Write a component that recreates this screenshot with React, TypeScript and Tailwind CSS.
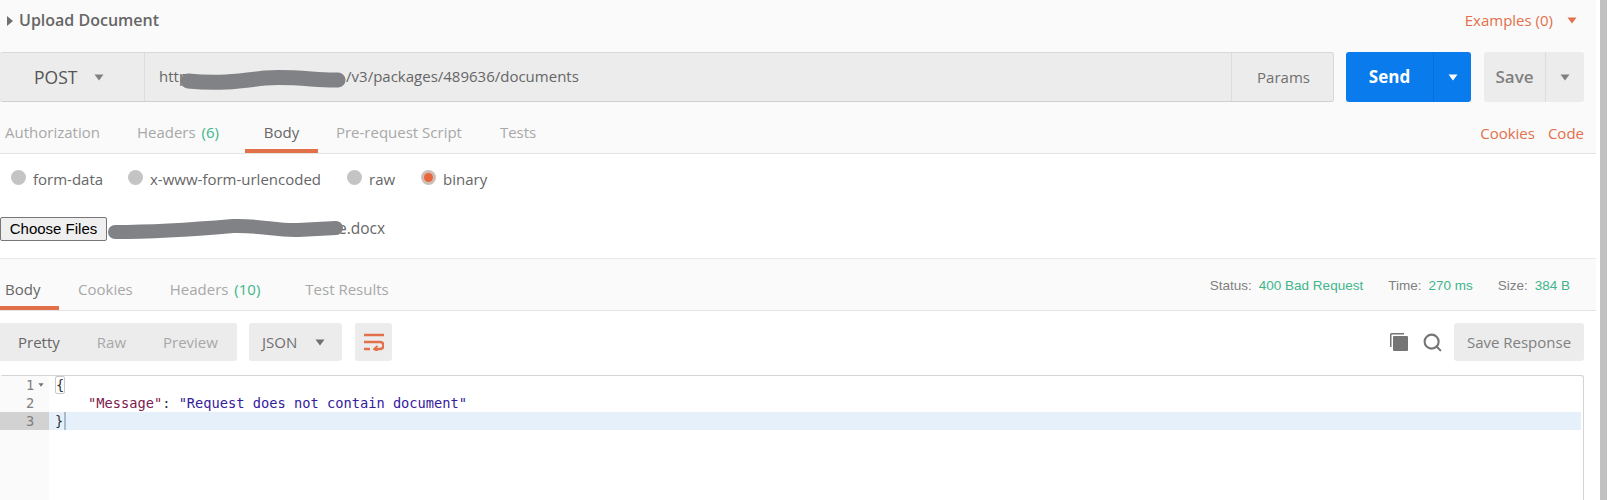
import { Search } from 'lucide-react'

const sans = 'font-["Open_Sans",sans-serif]'
const tab = 'flex h-full items-center pt-[9px]'

function Caret({ className }: { className: string }) {
  return (
    <svg viewBox="0 0 10 7" className={className}>
      <path d="M0.5 0.5h9L5 6.5z" fill="currentColor" />
    </svg>
  )
}

function Redaction({ className, box, d, width }: { className: string; box: string; d: string; width: number }) {
  return (
    <svg viewBox={box} className={`absolute ${className}`}>
      <path d={d} fill="none" stroke="#808285" strokeWidth={width} strokeLinecap="round" strokeLinejoin="round" />
    </svg>
  )
}

function RadioOption({ label, active, className }: { label: string; active?: boolean; className: string }) {
  return (
    <div className={`flex items-center ${className}`}>
      <span
        className={`mb-[6px] flex size-[15px] items-center justify-center rounded-full ${active ? 'bg-[#cdbfb8]' : 'bg-[#c4c4c4]'}`}
      >
        {active && <span className="size-[9px] rounded-full bg-[#e8683c]" />}
      </span>
      <span className="-mt-[2px] ml-[7px] text-[15px] text-[#666]">{label}</span>
    </div>
  )
}

export default function App() {
  return (
    <div className={`flex h-[500px] w-[1610px] overflow-hidden bg-white ${sans}`}>
      <div className="flex w-[1596px] flex-col">
        <div className="h-[154px] bg-[#fafafa]">
          <div className="flex h-[52px] items-start justify-between pt-[9px]">
            <div className="flex items-center pl-[7px]">
              <svg viewBox="0 0 6 10" className="h-[10px] w-[6px] text-[#707070]">
                <path d="M0 0l6 5-6 5z" fill="currentColor" />
              </svg>
              <span className="ml-[6px] text-[16px] font-semibold leading-[23px] text-[#666]">
                Upload Document
              </span>
            </div>
            <div className="flex items-center pr-[19px] pt-[1px]">
              <span className="text-[15px] leading-[20px] text-[#e2704a]">Examples (0)</span>
              <Caret className="ml-[14px] h-[7px] w-[10px] text-[#e2704a]" />
            </div>
          </div>

          <div className="flex h-[50px]">
            <div className="relative flex w-[1334px] rounded-[3px] border-y border-r border-[#d8d8d8] border-b-[#cfcfcf] bg-[#ececec]">
              <div className="flex w-[145px] items-center border-r border-[#dcdcdc] pl-[34px]">
                <span className="text-[17.5px] text-[#555]">POST</span>
                <Caret className="ml-[17px] h-[7px] w-[10px] text-[#808080]" />
              </div>
              <div className="flex flex-1 items-center pb-[2px] pl-[14px] text-[15px] text-[#666]">
                <span>http</span>
                <span className="ml-[158px]">/v3/packages/489636/documents</span>
              </div>
              <div className="flex w-[102px] items-center justify-center border-l border-[#dcdcdc] pl-[2px] text-[15px] text-[#707070]">
                Params
              </div>
              <Redaction
                className="left-[180px] top-[16px] h-[22px] w-[166px]"
                box="0 0 166 22"
                width={15}
                d="M8 12C40 15 60 12 85 9C115 7 140 12 158 11"
              />
            </div>

            <div className="ml-[12px] flex w-[125px] rounded-[3px] bg-[#097bed]">
              <div className="flex w-[87px] items-center justify-center text-[17px] font-bold text-white">
                Send
              </div>
              <div className="flex flex-1 items-center justify-center border-l border-[#0a6fd4]">
                <Caret className="h-[7px] w-[10px] text-white" />
              </div>
            </div>

            <div className="ml-[13px] flex w-[100px] rounded-[3px] bg-[#ececec]">
              <div className="flex w-[61px] items-center justify-center text-[17px] font-semibold text-[#808080]">
                Save
              </div>
              <div className="flex flex-1 items-center justify-center border-l border-[#dcdcdc]">
                <Caret className="h-[7px] w-[10px] text-[#808080]" />
              </div>
            </div>
          </div>

          <div className="flex h-[52px] items-center justify-between border-b border-[#e4e4e4] pl-[5px] pr-[12px] text-[15px]">
            <div className="flex h-full items-center text-[#a8a8a8]">
              <span className={tab}>Authorization</span>
              <span className={`ml-[37px] ${tab}`}>
                Headers&nbsp;<span className="ml-[2px] text-[#3fb58b]">(6)</span>
              </span>
              <span className={`ml-[26px] w-[73px] justify-center border-b-4 border-[#e27149] text-[#666] ${tab} pt-[13px]`}>
                Body
              </span>
              <span className={`ml-[18px] ${tab}`}>Pre-request Script</span>
              <span className={`ml-[38px] ${tab}`}>Tests</span>
            </div>
            <div className="flex gap-[13px] pt-[12px] text-[#e2704a]">
              <span>Cookies</span>
              <span>Code</span>
            </div>
          </div>
        </div>

        <div className="h-[105px] border-b border-[#e8e8e8]">
          <div className="flex h-[52px] items-center pl-[11px]">
            <RadioOption label="form-data" className="w-[117px]" />
            <RadioOption label="x-www-form-urlencoded" className="w-[219px]" />
            <RadioOption label="raw" className="w-[74px]" />
            <RadioOption label="binary" active className="" />
          </div>
          <div className="relative mt-[11px] flex h-[24px] items-center">
            <button className="h-[24px] w-[107px] rounded-[2px] border border-[#767676] bg-[#efefef] font-['Liberation_Sans',sans-serif] text-[15px] text-black">
              Choose Files
            </button>
            <span className="ml-[231px] text-[15.5px] text-[#666]">e.docx</span>
            <Redaction
              className="left-[108px] top-[1px] h-[22px] w-[236px]"
              box="0 0 236 22"
              width={14}
              d="M7 14C50 14 90 11 125 8C150 7 170 13 190 12L228 10"
            />
          </div>
        </div>

        <div className="flex h-[52px] items-center justify-between border-b border-[#e4e4e4] bg-[#fafafa] pr-[26px] text-[15px]">
          <div className="flex h-full items-center text-[#a8a8a8]">
            <span className={`w-[59px] border-b-4 border-[#e27149] pl-[5px] text-[#666] ${tab} pt-[13px]`}>
              Body
            </span>
            <span className={`ml-[19px] ${tab}`}>Cookies</span>
            <span className={`ml-[37px] ${tab}`}>
              Headers&nbsp;<span className="ml-[2px] text-[#3fb58b]">(10)</span>
            </span>
            <span className={`ml-[45px] ${tab}`}>Test Results</span>
          </div>
          <div className="mt-[3px] flex font-['Liberation_Sans',sans-serif] text-[13.5px] text-[#808080]">
            <span>Status:</span>
            <span className="ml-[7px] text-[#3fb58b]">400 Bad Request</span>
            <span className="ml-[25px]">Time:</span>
            <span className="ml-[7px] text-[#3fb58b]">270 ms</span>
            <span className="ml-[25px]">Size:</span>
            <span className="ml-[7px] text-[#3fb58b]">384 B</span>
          </div>
        </div>

        <div className="flex h-[64px] items-start pr-[12px] pt-[12px] text-[15px]">
          <div className="flex h-[38px] w-[237px] items-center rounded-r-[3px] bg-[#ececec] pl-[18px]">
            <span className="text-[#666]">Pretty</span>
            <span className="ml-[37px] text-[#a8a8a8]">Raw</span>
            <span className="ml-[37px] text-[#a8a8a8]">Preview</span>
          </div>
          <div className="ml-[12px] flex h-[38px] w-[93px] items-center rounded-[3px] bg-[#ececec] pl-[13px]">
            <span className="text-[#707070]">JSON</span>
            <Caret className="ml-[18px] h-[7px] w-[10px] text-[#707070]" />
          </div>
          <div className="ml-[13px] flex h-[38px] w-[37px] items-center justify-center rounded-[3px] bg-[#ececec]">
            <svg viewBox="0 0 20 18" className="h-[18px] w-[20px]" fill="none" stroke="#e2704a" strokeWidth="2.6">
              <path d="M0 2h20M0 9h16a3.5 3.5 0 0 1 0 7h-5M0 16h6" />
              <path d="M13.5 12.8L10 16l3.5 2" strokeWidth="1.8" />
            </svg>
          </div>
          <div className="ml-auto flex h-[38px] items-center">
            <svg viewBox="0 0 18 18" className="size-[18px]" fill="#757575">
              <path d="M0 1.5A1.5 1.5 0 0 1 1.5 0H14v1.5H1.5V14H0z" />
              <rect x="3" y="3" width="15" height="15" rx="1" />
            </svg>
            <Search className="ml-[14px] size-[21px] text-[#757575]" strokeWidth={2.4} />
            <div className="ml-[11px] flex h-[38px] w-[130px] items-center justify-center rounded-[3px] bg-[#ececec] text-[#808080]">
              Save Response
            </div>
          </div>
        </div>

        <div className="ml-0 mr-[12px] flex-1 rounded-t-[3px] border-r border-t border-[#d4d4d4]">
          <div className="flex h-full font-['DejaVu_Sans_Mono',monospace] text-[13.7px] leading-[18px]">
            <div className="w-[49px] shrink-0 bg-[#fafafa] text-[#808080]">
              <div className="flex h-[18px] items-center pl-[26px]">
                <span className="w-[12px]">1</span>
                <Caret className="h-[4px] w-[6px] text-[#707070]" />
              </div>
              <div className="h-[18px] pl-[26px]">2</div>
              <div className="h-[18px] bg-[#d2d2d2] pl-[26px]">3</div>
            </div>
            <div className="flex-1">
              <div className="h-[18px] pl-[6px] text-[#333]">
                <span className="inline-block h-[18px] w-[10px] rounded-[2px] border border-[#c8c8c8] leading-[16px]">{'{'}</span>
              </div>
              <div className="h-[18px] whitespace-pre pl-[6px]">
                <span>{'    '}</span>
                <span className="text-[#7d2050]">"Message"</span>
                <span className="text-[#333]">: </span>
                <span className="text-[#35209c]">"Request does not contain document"</span>
              </div>
              <div className="mr-[2px] flex h-[18px] bg-[#e6f0fb] pl-[6px] text-[#333]">
                <span className="w-[9px]">{'}'}</span>
                <span className="h-[18px] w-[2px] bg-[#a9bacb]" />
              </div>
            </div>
          </div>
        </div>
      </div>
      <div className="ml-[4px] h-[500px] w-[7px] bg-[#c1c1c1]" />
    </div>
  )
}
